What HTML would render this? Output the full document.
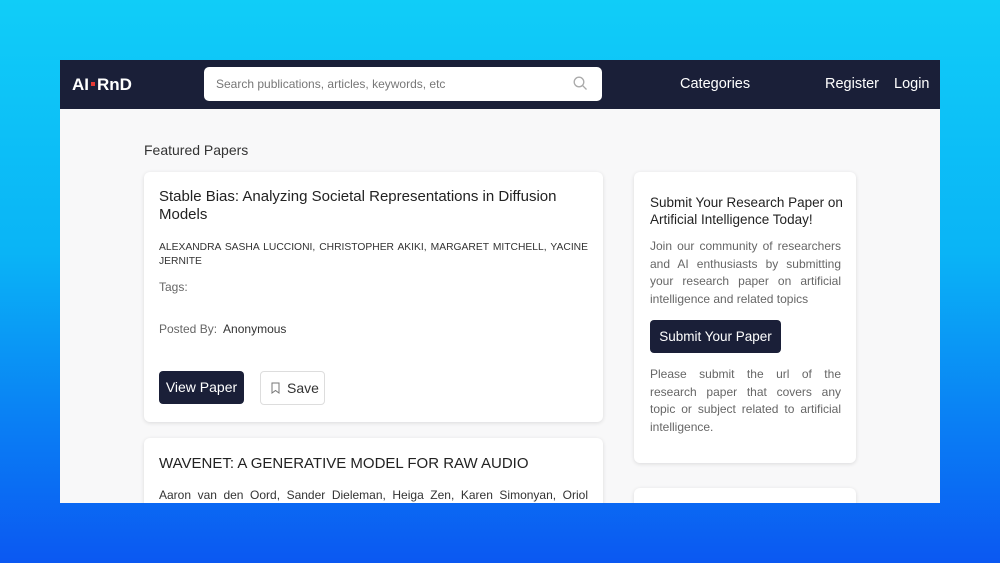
<!DOCTYPE html>
<html><head><meta charset="utf-8"><style>
*{margin:0;padding:0;box-sizing:border-box}
body{width:1000px;height:563px;overflow:hidden;background:linear-gradient(180deg,#10cdf8 0%,#0ab4f6 45%,#0a7ff4 75%,#0b58f2 100%);font-family:"Liberation Sans",sans-serif;position:relative}
.win{position:absolute;left:60px;top:60px;width:880px;height:443px;background:#f8f8f9;overflow:hidden}
.nav{height:49px;background:#1a1f38;position:relative;color:#fff}
.logo{position:absolute;left:12px;top:15px;font-weight:bold;font-size:17px;letter-spacing:0}
.logo i{display:inline-block;width:4px;height:4px;background:#e53935;margin:0 2px 4px}
.search{position:absolute;left:144px;top:7px;width:398px;height:34px;background:#fff;border-radius:5px;font-size:12px;color:#777;padding:10px 12px}
.search svg{position:absolute;right:14px;top:9px}
.nl{position:absolute;top:16px;font-size:14.5px}
.card{position:absolute;background:#fff;border-radius:6px;box-shadow:0 1px 4px rgba(0,0,0,.12)}
.h{font-size:15px;color:#222;line-height:18px}
.au{font-size:10.3px;color:#333;letter-spacing:0;line-height:14px;text-align:justify}
.sm{font-size:12px;color:#666}
.btn{position:absolute;background:#1a1f38;color:#fff;border-radius:4px;font-size:14px;text-align:center}
p.t{font-size:12px;color:#666;line-height:17.5px;text-align:justify}
</style></head><body>
<div class="win">
<div class="nav">
<div class="logo">AI<i></i>RnD</div>
<div class="search">Search publications, articles, keywords, etc
<svg width="15" height="15" viewBox="0 0 15 15"><circle cx="6" cy="6" r="4.8" fill="none" stroke="#aaa" stroke-width="1.3"/><path d="M9.6 9.6L13.5 13.5" stroke="#aaa" stroke-width="1.3"/></svg></div>
<div class="nl" style="left:620px">Categories</div>
<div class="nl" style="left:765px">Register</div>
<div class="nl" style="left:834px">Login</div>
</div>
<div style="position:absolute;left:84px;top:82px;font-size:14px;color:#333">Featured Papers</div>
<div class="card" style="left:84px;top:112px;width:459px;height:250px">
<div class="h" style="position:absolute;left:15px;top:16px;width:420px">Stable Bias: Analyzing Societal Representations in Diffusion Models</div>
<div class="au" style="position:absolute;left:15px;top:69px;width:429px">ALEXANDRA SASHA LUCCIONI, CHRISTOPHER AKIKI, MARGARET MITCHELL, YACINE JERNITE</div>
<div class="sm" style="position:absolute;left:15px;top:108px">Tags:</div>
<div class="sm" style="position:absolute;left:15px;top:150px">Posted By:&nbsp; <span style="color:#333">Anonymous</span></div>
<div class="btn" style="left:15px;top:199px;width:85px;height:33px;line-height:33px">View Paper</div>
<div style="position:absolute;left:116px;top:199px;width:65px;height:34px;border:1px solid #ddd;border-radius:4px;font-size:14px;color:#333;line-height:32px;padding-left:26px">Save
<svg style="position:absolute;left:10px;top:10px" width="9" height="12" viewBox="0 0 9 12"><path d="M1 1H8V11L4.5 8.5L1 11Z" fill="none" stroke="#777" stroke-width="1"/></svg></div>
</div>
<div class="card" style="left:84px;top:378px;width:459px;height:100px">
<div class="h" style="position:absolute;left:15px;top:17px">WAVENET: A GENERATIVE MODEL FOR RAW AUDIO</div>
<div style="position:absolute;left:15px;top:50px;width:429px;font-size:12px;color:#333;text-align:justify;text-align-last:justify">Aaron van den Oord, Sander Dieleman, Heiga Zen, Karen Simonyan, Oriol</div>
</div>
<div class="card" style="left:574px;top:112px;width:222px;height:291px">
<div style="position:absolute;left:16px;top:23px;width:195px;font-size:13.5px;color:#222;line-height:16.5px">Submit Your Research Paper on Artificial Intelligence Today!</div>
<p class="t" style="position:absolute;left:16px;top:66px;width:191px">Join our community of researchers and AI enthusiasts by submitting your research paper on artificial intelligence and related topics</p>
<div class="btn" style="left:16px;top:148px;width:131px;height:33px;line-height:33px;font-size:13.5px">Submit Your Paper</div>
<p class="t" style="position:absolute;left:16px;top:194px;width:191px">Please submit the url of the research paper that covers any topic or subject related to artificial intelligence.</p>
</div>
<div class="card" style="left:574px;top:428px;width:222px;height:60px"></div>
</div>
</body></html>
